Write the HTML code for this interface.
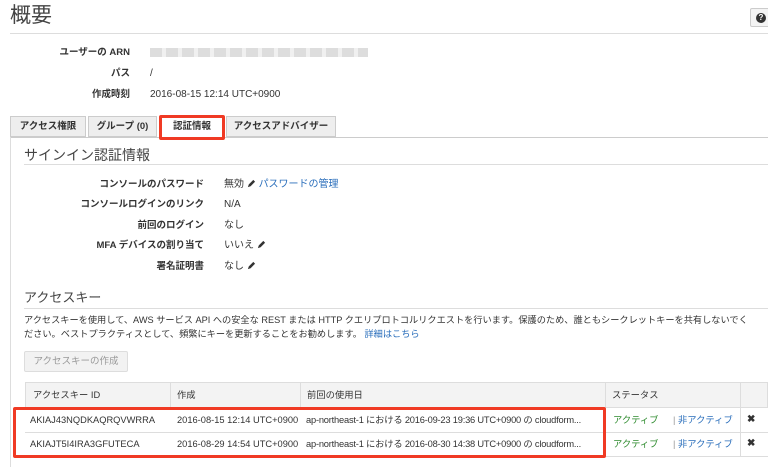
<!DOCTYPE html>
<html><head><meta charset="utf-8"><style>
*{margin:0;padding:0;box-sizing:border-box}
body{width:768px;height:465px;overflow:hidden;background:#fff;font-family:"Liberation Sans","Noto Sans CJK JP",sans-serif;color:#333;font-size:10px;line-height:12px;position:relative}
.a{position:absolute;white-space:nowrap}
.lbl{font-weight:bold;text-align:right;color:#333;font-size:9.5px}
.blue{color:#2a6ebb}
.green{color:#2e8b2e}
.t{font-size:9.3px}
.pen{display:inline-block;width:9px;height:9px;vertical-align:-1px}
</style></head><body>
<div class="a" style="left:10px;top:3px;font-size:21px;line-height:26px;color:#444">概要</div>
<div class="a" style="left:10px;top:33px;width:758px;height:1px;background:#ddd"></div>
<div class="a" style="left:750px;top:8px;width:20px;height:19px;border:1px solid #ccc;border-radius:2px;background:#f4f4f4"><div style="position:absolute;left:5px;top:4px;width:10px;height:10px;border-radius:50%;background:#333;color:#fff;font-size:8px;font-weight:bold;text-align:center;line-height:10px">?</div></div>

<div class="a lbl" style="right:638px;top:47px">ユーザーの ARN</div>
<div class="a" style="left:150px;top:48px;width:218px;height:9px;background:repeating-linear-gradient(90deg,#ddd 0 12px,#f0f0f0 12px 16px)"></div>
<div class="a lbl" style="right:638px;top:68px">パス</div>
<div class="a" style="left:150px;top:68px">/</div>
<div class="a lbl" style="right:638px;top:89px">作成時刻</div>
<div class="a" style="left:150px;top:89px">2016-08-15 12:14 UTC+0900</div>

<div class="a" style="left:10px;top:116px;width:76px;height:21px;background:#eee;border:1px solid #ccc;font-weight:bold;font-size:9.5px;text-align:center;line-height:19px">アクセス権限</div>
<div class="a" style="left:88px;top:116px;width:69px;height:21px;background:#eee;border:1px solid #ccc;font-weight:bold;font-size:9.5px;text-align:center;line-height:19px">グループ (0)</div>
<div class="a" style="left:226px;top:116px;width:110px;height:21px;background:#eee;border:1px solid #ccc;font-weight:bold;font-size:9.5px;text-align:center;line-height:19px">アクセスアドバイザー</div>
<div class="a" style="left:10px;top:137px;width:758px;height:1px;background:#ccc"></div>
<div class="a" style="left:10px;top:137px;width:1px;height:330px;background:#ddd"></div>
<div class="a" style="left:159px;top:115px;width:66px;height:25px;background:#fff;border:3px solid #f03a24;border-radius:2px;font-weight:bold;font-size:9.5px;text-align:center;line-height:18px">認証情報</div>

<div class="a" style="left:24px;top:147px;font-size:14px;line-height:16px;color:#444">サインイン認証情報</div>
<div class="a" style="left:24px;top:164px;width:744px;height:1px;background:#ddd"></div>

<div class="a lbl" style="right:564px;top:179px">コンソールのパスワード</div>
<div class="a" style="left:224px;top:179px">無効 <svg class="pen" viewBox="0 0 10 10"><path d="M1 9 L2 6 L7 1 L9 3 L4 8 Z" fill="#333"/></svg> <span class="blue">パスワードの管理</span></div>
<div class="a lbl" style="right:564px;top:199px">コンソールログインのリンク</div>
<div class="a" style="left:224px;top:199px">N/A</div>
<div class="a lbl" style="right:564px;top:220px">前回のログイン</div>
<div class="a" style="left:224px;top:220px">なし</div>
<div class="a lbl" style="right:564px;top:240px">MFA デバイスの割り当て</div>
<div class="a" style="left:224px;top:240px">いいえ <svg class="pen" viewBox="0 0 10 10"><path d="M1 9 L2 6 L7 1 L9 3 L4 8 Z" fill="#333"/></svg></div>
<div class="a lbl" style="right:564px;top:261px">署名証明書</div>
<div class="a" style="left:224px;top:261px">なし <svg class="pen" viewBox="0 0 10 10"><path d="M1 9 L2 6 L7 1 L9 3 L4 8 Z" fill="#333"/></svg></div>

<div class="a" style="left:24px;top:290px;font-size:13px;line-height:16px;color:#444">アクセスキー</div>
<div class="a" style="left:24px;top:308px;width:744px;height:1px;background:#ddd"></div>
<div class="a" style="left:24px;top:314px;font-size:9.2px">アクセスキーを使用して、AWS サービス API への安全な REST または HTTP クエリプロトコルリクエストを行います。保護のため、誰ともシークレットキーを共有しないでく</div>
<div class="a" style="left:24px;top:328px;font-size:9.2px">ださい。ベストプラクティスとして、頻繁にキーを更新することをお勧めします。 <span class="blue">詳細はこちら</span></div>

<div class="a" style="left:24px;top:351px;width:104px;height:21px;border:1px solid #ddd;border-radius:2px;background:#f2f2f2;color:#999;font-size:9.5px;text-align:center;line-height:19px">アクセスキーの作成</div>

<div class="a" style="left:25px;top:382px;width:743px;height:26px;background:#f3f3f3;border:1px solid #ddd"></div>
<div class="a" style="left:25px;top:432px;width:743px;height:1px;background:#ddd"></div>
<div class="a" style="left:25px;top:456px;width:743px;height:1px;background:#ddd"></div>
<div class="a" style="left:170px;top:382px;width:1px;height:26px;background:#ddd"></div>
<div class="a" style="left:300px;top:382px;width:1px;height:26px;background:#ddd"></div>
<div class="a" style="left:605px;top:382px;width:1px;height:74px;background:#ddd"></div>
<div class="a" style="left:740px;top:382px;width:1px;height:74px;background:#ddd"></div>
<div class="a t" style="left:33px;top:389px">アクセスキー ID</div>
<div class="a t" style="left:177px;top:389px">作成</div>
<div class="a t" style="left:307px;top:389px">前回の使用日</div>
<div class="a t" style="left:612px;top:389px">ステータス</div>

<div class="a t" style="left:30px;top:414px">AKIAJ43NQDKAQRQVWRRA</div>
<div class="a t" style="left:177px;top:414px">2016-08-15 12:14 UTC+0900</div>
<div class="a t" style="left:306px;top:414px;letter-spacing:-0.2px">ap-northeast-1 における 2016-09-23 19:36 UTC+0900 の cloudform...</div>
<div class="a t" style="left:613px;top:414px"><span class="green">アクティブ</span></div>
<div class="a t" style="left:673px;top:414px;color:#999">| <span class="blue">非アクティブ</span></div>
<div class="a" style="left:747px;top:414px;font-weight:bold">✖</div>

<div class="a t" style="left:30px;top:438px">AKIAJT5I4IRA3GFUTECA</div>
<div class="a t" style="left:177px;top:438px">2016-08-29 14:54 UTC+0900</div>
<div class="a t" style="left:306px;top:438px;letter-spacing:-0.2px">ap-northeast-1 における 2016-08-30 14:38 UTC+0900 の cloudform...</div>
<div class="a t" style="left:613px;top:438px"><span class="green">アクティブ</span></div>
<div class="a t" style="left:673px;top:438px;color:#999">| <span class="blue">非アクティブ</span></div>
<div class="a" style="left:747px;top:438px;font-weight:bold">✖</div>

<div class="a" style="left:13px;top:407px;width:593px;height:51px;border:3px solid #f03a24;border-radius:2px"></div>
</body></html>
